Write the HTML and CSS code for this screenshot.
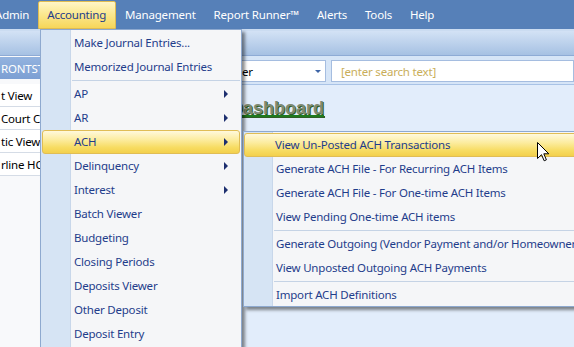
FILE: index.html
```html
<!DOCTYPE html>
<html lang="en">
<head>
  <meta charset="UTF-8" />
  <title>Accounting - ACH</title>
  <link rel="stylesheet" href="styles.css">
</head>
<body>
  <div class="app">
    <nav class="menubar">
      <span class="menu-item admin">Admin</span>
      <span class="menu-item active">Accounting</span>
      <span class="menu-item">Management</span>
      <span class="menu-item">Report Runner™</span>
      <span class="menu-item">Alerts</span>
      <span class="menu-item">Tools</span>
      <span class="menu-item">Help</span>
    </nav>
    <div class="toolbar"></div>

    <div class="workspace">
      <aside class="tree">
        <div class="tree-head">RONTSTEP</div>
        <div class="tree-row">t View</div>
        <div class="tree-row">Court Condos</div>
        <div class="tree-row">tic View Apts</div>
        <div class="tree-row">rline HOA</div>
      </aside>
      <section class="content">
        <div class="filter-bar">
          <div class="combo"><span class="combo-text">er</span><span class="caret"></span></div>
          <div class="search">[enter search text]</div>
        </div>
        <h2 class="dash-title">Dashboard</h2>
      </section>
    </div>

    <!-- Accounting dropdown -->
    <ul class="dropdown">
      <li class="item">Make Journal Entries...</li>
      <li class="item">Memorized Journal Entries</li>
      <li class="sep"></li>
      <li class="item">AP <span class="arrow"></span></li>
      <li class="item">AR <span class="arrow"></span></li>
      <li class="item hover">ACH <span class="arrow"></span></li>
      <li class="item">Delinquency <span class="arrow"></span></li>
      <li class="item">Interest <span class="arrow"></span></li>
      <li class="item">Batch Viewer</li>
      <li class="item">Budgeting</li>
      <li class="item">Closing Periods</li>
      <li class="item">Deposits Viewer</li>
      <li class="item">Other Deposit</li>
      <li class="item">Deposit Entry</li>
    </ul>

    <!-- ACH submenu -->
    <ul class="dropdown submenu">
      <li class="item hover">View Un-Posted ACH Transactions</li>
      <li class="item">Generate ACH File - For Recurring ACH Items</li>
      <li class="item">Generate ACH File - For One-time ACH Items</li>
      <li class="item">View Pending One-time ACH items</li>
      <li class="sep"></li>
      <li class="item">Generate Outgoing (Vendor Payment and/or Homeowner Refund)</li>
      <li class="item">View Unposted Outgoing ACH Payments</li>
      <li class="sep"></li>
      <li class="item">Import ACH Definitions</li>
    </ul>

    <svg class="cursor" width="13" height="20" viewBox="0 0 13 20">
      <path d="M0.5 0.5 L0.5 16.5 L4.5 12.7 L7.2 18.8 L9.4 17.8 L6.8 11.8 L11.8 11.8 Z" fill="#fff" stroke="#000" stroke-width="1" stroke-linejoin="miter"/>
    </svg>
  </div>
</body>
</html>
```

FILE: styles.css
```css
:root {
  --bar-blue: #5680b8;
  --menu-text: #1f3d8b;
  --menu-bg: #f5f6f8;
  --menu-gutter: #d6e4f4;
  --menu-border: #8ea9cf;
}

* {
  box-sizing: border-box;
}

html, body {
  margin: 0;
  height: 100%;
  overflow: hidden;
}

body {
  font-family: "Noto Sans", "Open Sans", sans-serif;
  font-size: 11.5px;
  letter-spacing: -0.2px;
  color: var(--menu-text);
  background: #e2edfb;
}

.app {
  position: relative;
  width: 574px;
  height: 347px;
  overflow: hidden;
}

/* top menu bar */
.menubar {
  display: flex;
  height: 29px;
  align-items: stretch;
  background: var(--bar-blue);
  padding-top: 1px;
  margin-left: -14px;
}

.menu-item {
  display: flex;
  align-items: center;
  padding: 0 8px 2px;
  color: #fff;
  white-space: nowrap;
  border: 1px solid transparent;
  border-radius: 2px 2px 0 0;
}

.menu-item.active {
  padding: 0 9px 2px 8px;
  color: var(--menu-text);
  border-color: #e0bc52;
  background: linear-gradient(#fff6c8, #fbe891 45%, #f6d659 100%);
}

.toolbar {
  height: 27px;
  border-top: 2px solid #cbdcf1;
  border-bottom: 1px solid #8eabd5;
  background: linear-gradient(#d3e2f5, #a6c1e3);
}

/* page below the bars */
.workspace {
  display: flex;
  height: 291px;
}

.tree {
  width: 40px;
  overflow: hidden;
  background: #f8f9fb;
  color: #000;
}

.tree-head {
  height: 22px;
  margin-top: 1px;
  padding-left: 1px;
  display: flex;
  align-items: center;
  white-space: nowrap;
  color: #fff;
  background: linear-gradient(#93b3df, #7c9fd3);
}

.tree-row {
  height: 23px;
  padding-left: 1px;
  display: flex;
  align-items: center;
  white-space: nowrap;
  background: #fff;
  border-bottom: 1px solid #d5dce6;
}

.tree-head + .tree-row {
  margin-top: 5px;
}

.content {
  flex: 1;
  background: #e2edfb;
}

.filter-bar {
  display: flex;
  gap: 5px;
  height: 29px;
  padding: 4px 0 0 165px;
  background: #d6e5f7;
  border-bottom: 1px solid #a9c3e6;
}

.combo {
  width: 121px;
  height: 22px;
  display: flex;
  align-items: center;
  justify-content: space-between;
  padding: 0 4px 0 36px;
  background: #fff;
  border: 1px solid #a5bde0;
  color: #000;
}

.caret {
  width: 0;
  height: 0;
  border-left: 3px solid transparent;
  border-right: 3px solid transparent;
  border-top: 3px solid #3d64a6;
}

.search {
  flex: 1;
  height: 22px;
  display: flex;
  align-items: center;
  padding-left: 9px;
  background: #fff;
  border: 1px solid #a5bde0;
  color: #c9ae5a;
}

.dash-title {
  margin: 13px 0 0 190px;
  font-family: "Liberation Sans", Arial, sans-serif;
  font-size: 18px;
  letter-spacing: 0;
  font-weight: bold;
  color: #7f8a73;
  text-decoration: underline #1e7a1e;
  text-decoration-thickness: 2px;
  text-shadow: 1px 1px 0 #2f5f26;
}

/* popup menus */
.dropdown {
  position: absolute;
  top: 29px;
  left: 40px;
  width: 202px;
  height: 330px;
  margin: 0;
  padding: 1px 0 0;
  list-style: none;
  border: 1px solid var(--menu-border);
  background: linear-gradient(to right, var(--menu-gutter) 0 29px, #c8d7ea 29px 30px, var(--menu-bg) 30px);
  box-shadow: 3px 3px 3px rgba(0, 0, 0, 0.45);
}

.item {
  height: 24px;
  display: flex;
  align-items: center;
  justify-content: space-between;
  padding: 0 12px 1px 32px;
  white-space: nowrap;
  border: 1px solid transparent;
}

.item.hover {
  margin: 0 1px;
  padding-left: 31px;
  padding-right: 11px;
  border-color: #e0bd55;
  border-radius: 3px;
  background: linear-gradient(#fff9dc, #fcec9e 40%, #f7dc62 75%, #f3d04c);
}

.arrow {
  width: 0;
  height: 0;
  border-left: 4px solid #1d2f6f;
  border-top: 4px solid transparent;
  border-bottom: 4px solid transparent;
}

.sep {
  height: 3px;
  margin-left: 31px;
  margin-right: 1px;
  border-top: 1px solid transparent;
  background: linear-gradient(#c5d3e5, #c5d3e5) 0 0 / 100% 1px no-repeat;
}

.submenu {
  top: 131px;
  left: 243px;
  width: 360px;
  height: 176px;
  background: linear-gradient(to right, var(--menu-gutter) 0 28px, #c8d7ea 28px 29px, var(--menu-bg) 29px);
}

.submenu .item {
  padding-left: 31px;
}

.submenu .item.hover {
  margin: 0;
  padding-left: 30px;
}

.submenu .sep {
  margin-left: 30px;
}

.cursor {
  position: absolute;
  left: 537px;
  top: 142px;
}
```
